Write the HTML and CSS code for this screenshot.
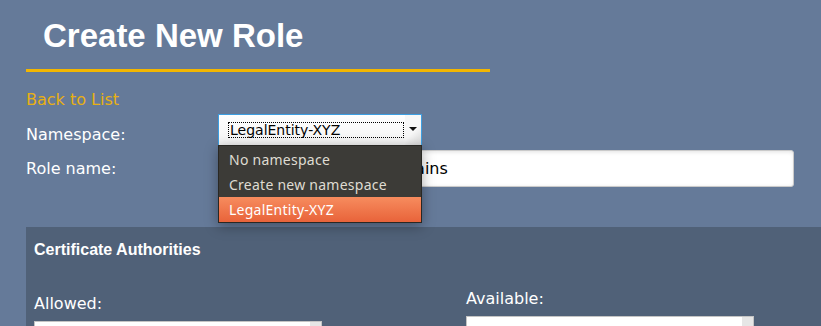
FILE: index.html
```html
<!DOCTYPE html>
<html lang="en">
<head>
    <meta charset="UTF-8">
    <meta name="viewport" content="width=device-width, initial-scale=1.0">
    <title>Create New Role</title>
    <link rel="stylesheet" href="styles.css">
</head>
<body>
    <div class="container">
        <h1>Create New Role</h1>

        <a class="back-link" href="#">Back to List</a>

        <form id="roleForm">
            <div class="form-row ns-row">
                <label class="field-label" for="namespace">Namespace:</label>
                <div class="select" id="namespace">
                    <span class="select-value">LegalEntity-XYZ</span>
                    <span class="select-button"><span class="select-arrow"></span></span>

                    <ul class="dropdown">
                        <li class="dropdown-item">No namespace</li>
                        <li class="dropdown-item">Create new namespace</li>
                        <li class="dropdown-item active">LegalEntity-XYZ</li>
                    </ul>
                </div>
            </div>

            <div class="form-row">
                <label class="field-label" for="roleName">Role name:</label>
                <input class="text-input" type="text" id="roleName" value="Legal Entity XYZ - Domains">
            </div>

            <div class="panel">
                <h3>Certificate Authorities</h3>

                <div class="ca-columns">
                    <div class="ca-col allowed">
                        <label class="list-label">Allowed:</label>
                        <div class="listbox"></div>
                    </div>
                    <div class="ca-col available">
                        <label class="list-label">Available:</label>
                        <div class="listbox"></div>
                    </div>
                </div>
            </div>
        </form>
    </div>
</body>
</html>
```

FILE: styles.css
```css
body {
    margin: 0;
    padding: 0;
    background-color: #657a99;
    font-family: "DejaVu Sans", sans-serif;
    font-size: 16px;
    color: #fff;
    overflow: hidden;
}

.container {
    padding: 0 27px 0 26px;
}

h1 {
    margin: 0;
    width: 447px;
    padding: 17px 0 15px 17px;
    border-bottom: 3px solid #f3b600;
    font-family: "Liberation Sans", Arial, sans-serif;
    font-size: 33px;
    line-height: 37px;
    font-weight: bold;
    color: #fff;
}

.back-link {
    display: block;
    margin-top: 18px;
    color: #e8b012;
    text-decoration: none;
}

.form-row {
    display: flex;
    align-items: center;
    margin-top: 4px;
}

.ns-row {
    margin-top: 5px;
}

.field-label {
    width: 192px;
    flex-shrink: 0;
}

.ns-row .field-label {
    padding-top: 9px;
}

/* closed select, drawn open */
.select {
    position: relative;
    display: flex;
    align-items: center;
    width: 204px;
    height: 32px;
    box-sizing: border-box;
    border: 1px solid #3d9fe2;
    background: linear-gradient(#fff, #f3f3f3);
}

.select-value {
    box-sizing: border-box;
    width: 176px;
    height: 16px;
    margin-left: 9px;
    padding-left: 1px;
    border: 1px dotted #000;
    font-size: 14px;
    line-height: 14px;
    color: #000;
}

.select-button {
    display: flex;
    align-items: center;
    justify-content: center;
    align-self: stretch;
    width: 16px;
    margin-left: auto;
    background: linear-gradient(135deg, #f7f7f7 55%, #d6d6d6);
}

.select-arrow {
    width: 0;
    height: 0;
    margin-top: -3px;
    border-left: 4px solid transparent;
    border-right: 4px solid transparent;
    border-top: 4px solid #111;
}

.dropdown {
    position: absolute;
    top: 100%;
    left: -1px;
    width: 204px;
    box-sizing: border-box;
    margin: 0;
    padding: 1px 0 0;
    list-style: none;
    background-color: #3c3b37;
    border: 1px solid #292824;
    box-shadow: 0 3px 12px rgba(0, 0, 0, 0.35);
    z-index: 5;
}

.dropdown-item {
    height: 25px;
    line-height: 26px;
    padding-left: 10px;
    font-family: "Noto Sans", sans-serif;
    font-size: 14px;
    letter-spacing: 0.25px;
    color: #dfdbd2;
}

.dropdown-item.active {
    background: linear-gradient(#f78c5e, #e8633a);
    color: #fff;
}

.text-input {
    flex: 1;
    height: 37px;
    box-sizing: border-box;
    padding: 0 11px;
    border: 1px solid #cacaca;
    border-radius: 3px;
    background-color: #fff;
    box-shadow: inset 1px 1px 4px rgba(0, 0, 0, 0.12);
    font-family: "DejaVu Sans", sans-serif;
    font-size: 16px;
    color: #000;
}

.panel {
    margin-top: 40px;
    margin-right: -27px;
    padding: 14px 0 60px 8px;
    background-color: #506178;
}

.panel h3 {
    margin: 0;
    font-family: "Liberation Sans", Arial, sans-serif;
    font-size: 16px;
    font-weight: bold;
}

.ca-columns {
    display: flex;
    margin-top: 30px;
}

.ca-col.allowed {
    width: 432px;
    padding-top: 5px;
}

.list-label {
    display: block;
}

.listbox {
    width: 288px;
    height: 120px;
    margin-top: 8px;
    box-sizing: border-box;
    border: 1px solid #c4c4c4;
    background: linear-gradient(to right, #fff calc(100% - 11px), #e6e6e6 0);
}
```
